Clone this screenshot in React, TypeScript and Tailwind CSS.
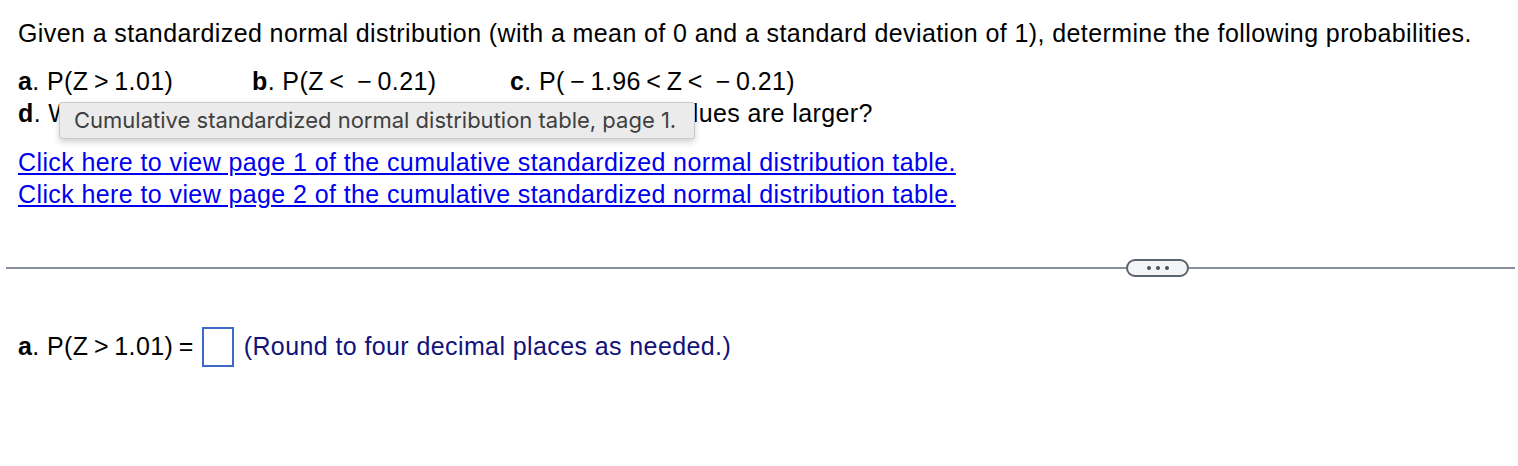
export default function App() {
  return (
    <div className="relative h-[466px] w-[1518px] bg-white font-['Liberation_Sans',Arial,sans-serif] text-[25px] tracking-[0.4px] text-black">
      <div className="px-[18px] pt-[20px]">
        <p className="leading-[26px]">
          Given a standardized normal distribution (with a mean of 0 and a standard deviation of 1), determine the following probabilities.
        </p>
        <div className="mt-[19px] flex leading-[32px]">
          <span className="w-[234px]">
            <b>a</b>. P(Z&thinsp;&gt;&thinsp;1.01)
          </span>
          <span className="w-[258px]">
            <b>b</b>. P(Z&thinsp;&lt;&ensp;&minus;&thinsp;0.21)
          </span>
          <span>
            <b>c</b>. P(&thinsp;&minus;&thinsp;1.96&thinsp;&lt;&thinsp;Z&thinsp;&lt;&ensp;&minus;&thinsp;0.21)
          </span>
        </div>
        <p className="leading-[32px]">
          <b>d</b>. What is the value of Z if only 31.30% of all possible Z-values are larger?
        </p>
        <div className="mt-[17px] flex flex-col items-start leading-[32px] text-[#0000ee]">
          <a href="#" className="underline">
            Click here to view page 1 of the cumulative standardized normal distribution table.
          </a>
          <a href="#" className="underline">
            Click here to view page 2 of the cumulative standardized normal distribution table.
          </a>
        </div>
      </div>

      <div className="mt-[49px] flex items-center pl-[6px] pr-[3px]">
        <div className="h-[2px] w-[1120px] bg-[#8a8f9c]" />
        <div className="flex h-[18px] w-[63px] items-center justify-center gap-[5px] rounded-full border-2 border-[#5b6370] bg-[#f4f5f7]">
          <span className="h-[4px] w-[4px] rounded-full bg-[#4b5260]" />
          <span className="h-[4px] w-[4px] rounded-full bg-[#4b5260]" />
          <span className="h-[4px] w-[4px] rounded-full bg-[#4b5260]" />
        </div>
        <div className="h-[2px] flex-1 bg-[#8a8f9c]" />
      </div>

      <div className="mt-[50px] flex items-center px-[18px]">
        <span>
          <b>a</b>. P(Z&thinsp;&gt;&thinsp;1.01)&thinsp;=
        </span>
        <span className="ml-[8px] h-[40px] w-[32px] border-2 border-[#3b6ac8]" />
        <span className="ml-[10px] text-[#12127a]">(Round to four decimal places as needed.)</span>
      </div>

      <div className="absolute left-[59px] top-[102px] flex h-[37px] w-[636px] items-center rounded-[3px] border border-[#c9c9c9] bg-[#ebebeb] pl-[14px] font-['Inter',sans-serif] text-[22px] tracking-normal text-[#3f3f3f] shadow-[0_3px_6px_rgba(0,0,0,0.18)]">
        Cumulative standardized normal distribution table, page 1.
      </div>
    </div>
  );
}
